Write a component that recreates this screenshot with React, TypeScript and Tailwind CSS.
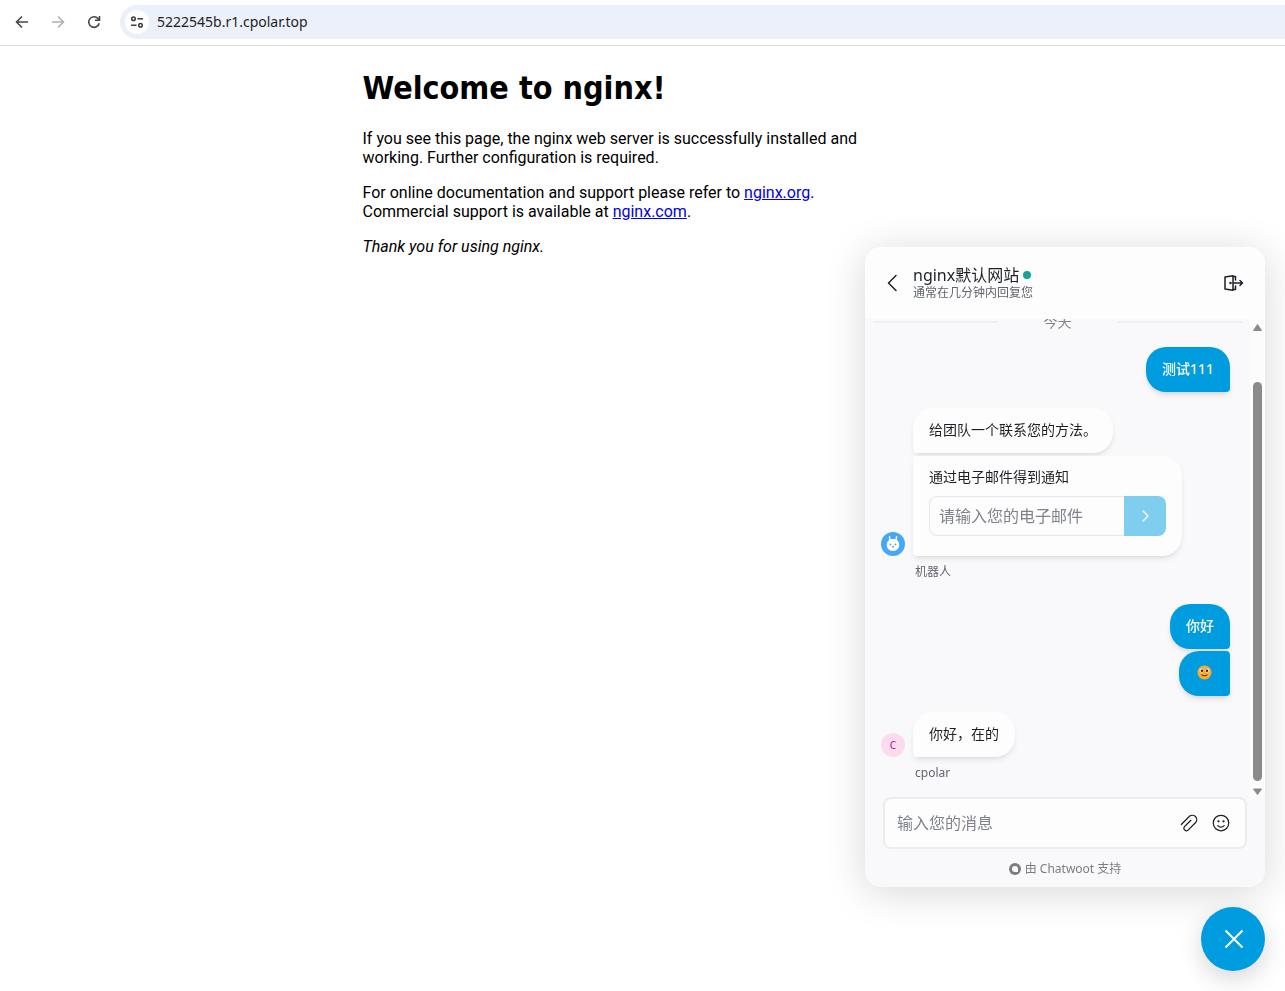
import type { ReactNode } from 'react';

function IconButton({ label, className = '', children }: { label: string; className?: string; children: ReactNode }) {
  return (
    <button type="button" aria-label={label} className={`flex shrink-0 items-center justify-center ${className}`}>
      {children}
    </button>
  );
}

function BrowserBar() {
  return (
    <header className="flex h-[46px] items-center border-b border-[#dcdde0] bg-white pb-px pl-3 font-['Noto_Sans',sans-serif]">
      <IconButton label="Back" className="size-5 text-[#474747]">
        <svg viewBox="0 0 20 20" className="size-5" fill="none" stroke="currentColor" strokeWidth="1.6">
          <path d="M16 10H4.8M10 4.5 4.5 10 10 15.5" />
        </svg>
      </IconButton>
      <IconButton label="Forward" className="ml-4 size-5 text-[#b0b0b0]">
        <svg viewBox="0 0 20 20" className="size-5" fill="none" stroke="currentColor" strokeWidth="1.6">
          <path d="M4 10h11.2M10 4.5 15.5 10 10 15.5" />
        </svg>
      </IconButton>
      <IconButton label="Reload" className="ml-4 size-5 text-[#474747]">
        <svg viewBox="0 0 20 20" className="size-5" fill="none" stroke="currentColor" strokeWidth="1.6">
          <path d="M15.2 11.2A5.3 5.3 0 1 1 14 6.5L15.3 8M15.5 4v4.3h-4.5" />
        </svg>
      </IconButton>
      <div className="ml-4 flex h-[34px] flex-1 items-center rounded-l-full bg-[#ecf0fa] pl-[5px]">
        <IconButton label="Site information" className="size-6 rounded-full bg-white text-[#3c3c3c]">
          <svg viewBox="0 0 16 16" className="size-4" fill="none" stroke="currentColor" strokeWidth="1.5">
            <circle cx="4.5" cy="4.8" r="1.8" />
            <path d="M8.5 4.8H14M2 11.2h5.5" />
            <circle cx="11.5" cy="11.2" r="1.8" />
          </svg>
        </IconButton>
        <input
          aria-label="Address"
          defaultValue="5222545b.r1.cpolar.top"
          className="ml-2 min-w-0 flex-1 bg-transparent text-sm text-[#1f1f1f] outline-none"
        />
      </div>
    </header>
  );
}

function WelcomePage() {
  return (
    <main className="mx-auto w-full max-w-[560px] pt-[21px] font-['Roboto',sans-serif] text-base leading-[19px] text-black">
      <h1 className="font-['DejaVu_Sans_Condensed','Noto_Sans',sans-serif] text-[32px] leading-[42px] font-bold">Welcome to nginx!</h1>
      <p className="mt-5">
        If you see this page, the nginx web server is successfully installed and
        <br />
        working. Further configuration is required.
      </p>
      <p className="mt-4">
        For online documentation and support please refer to{' '}
        <a href="http://nginx.org/" className="text-[#0000ee] underline">nginx.org</a>.<br />
        Commercial support is available at{' '}
        <a href="http://nginx.com/" className="text-[#0000ee] underline">nginx.com</a>.
      </p>
      <p className="mt-4">
        <em>Thank you for using nginx.</em>
      </p>
    </main>
  );
}

function WidgetHeader() {
  return (
    <header className="flex h-[72px] shrink-0 items-center bg-[#fdfdfd] pr-5 pl-4">
      <IconButton label="Back to home" className="size-6 text-[#1c2024]">
        <svg viewBox="0 0 24 24" className="size-6" fill="none" stroke="currentColor" strokeWidth="1.5" strokeLinecap="round" strokeLinejoin="round">
          <path d="M15 4.5 7.5 12l7.5 7.5" />
        </svg>
      </IconButton>
      <div className="ml-2 flex-1">
        <div className="flex items-center gap-1">
          <h2 className="text-base leading-5 text-[#1c2024]">nginx默认网站</h2>
          <span className="size-2 rounded-full bg-[#12a594]" />
        </div>
        <p className="text-xs leading-4 text-[#60646c]">通常在几分钟内回复您</p>
      </div>
      <IconButton label="End conversation" className="size-6 text-[#1c2024]">
        <svg viewBox="0 0 24 24" className="size-6" fill="none" stroke="currentColor" strokeWidth="1.5" strokeLinecap="round" strokeLinejoin="round">
          <path d="M12 4.8 4 6v12l8 1.2zM12 5.5h2.5V9M12 18.5h2.5V15M12 12h9.500M19 9.500l2.500 2.500-2.500 2.500" />
          <circle cx="9.5" cy="12" r=".5" />
        </svg>
      </IconButton>
    </header>
  );
}

function UserBubble({ children, className = '' }: { children: ReactNode; className?: string }) {
  return (
    <div className={`flex h-[45px] items-center self-end rounded-[20px] rounded-br-[4px] bg-[#009ce0] px-4 pb-[2px] text-sm font-medium text-white shadow-md shadow-black/10 ${className}`}>
      {children}
    </div>
  );
}

function AgentBubble({ children }: { children: ReactNode }) {
  return (
    <div className="flex h-[45px] items-center self-start rounded-[20px] rounded-bl-[4px] bg-[#fdfdfd] px-4 pb-[2px] text-sm text-[#1c2024] shadow-md shadow-black/8">
      {children}
    </div>
  );
}

function SmileyFace() {
  return (
    <svg viewBox="0 0 19 19" className="size-[19px]" role="img" aria-label="slightly smiling face">
      <circle cx="9.5" cy="9.5" r="7" fill="#fbab2c" />
      <circle cx="6.6" cy="7.6" r="2.1" fill="#fbe6d0" />
      <circle cx="12.4" cy="7.6" r="2.1" fill="#fbe6d0" />
      <circle cx="7" cy="7.7" r="1.3" fill="#402a32" />
      <circle cx="12" cy="7.7" r="1.3" fill="#402a32" />
      <path d="M6.800 12c1.500 1 3.900 1 5.400 0" fill="none" stroke="#402a32" strokeWidth="1" strokeLinecap="round" />
    </svg>
  );
}

function BotAvatar() {
  return (
    <svg viewBox="0 0 24 24" className="size-6 shrink-0" aria-hidden="true">
      <circle cx="12" cy="12" r="12" fill="#47a7f6" />
      <path d="M8.5 4.8 9 8.5M15.5 4.8 15 8.5" stroke="#fff" strokeWidth="1.4" strokeLinecap="round" />
      <path d="M12 7c4.5 0 6 2.5 6.2 5.8s-2.2 6.2-6.2 6.2-6.4-2.9-6.200-6.200S7.500 7 12 7Z" fill="#fff" />
      <circle cx="9.5" cy="12.5" r=".9" fill="#47a7f6" />
      <circle cx="14.5" cy="12.5" r=".9" fill="#47a7f6" />
      <path d="M11.2 14.5h1.6l-.8 1.200z" fill="#47a7f6" stroke="#47a7f6" strokeWidth=".8" />
    </svg>
  );
}

function EmailCard() {
  return (
    <form className="w-[269px] rounded-[20px] rounded-l-[4px] bg-[#fdfdfd] px-4 pt-[11px] pb-5 text-[#1c2024] shadow-md shadow-black/8">
      <label htmlFor="email" className="block text-sm leading-5">通过电子邮件得到通知</label>
      <div className="mt-[9px] flex h-10">
        <input
          id="email"
          type="email"
          placeholder="请输入您的电子邮件"
          className="min-w-0 flex-1 rounded-l-lg border border-r-0 border-[#e8e8ec] bg-transparent pl-[9px] text-base outline-none placeholder:text-[#80838d]"
        />
        <IconButton label="Submit email" className="w-[42px] rounded-r-lg bg-[#7fcdef] text-white">
          <svg viewBox="0 0 16 16" className="size-4" fill="none" stroke="currentColor" strokeWidth="1.3" strokeLinecap="round" strokeLinejoin="round">
            <path d="m6 3 5 5-5 5" />
          </svg>
        </IconButton>
      </div>
    </form>
  );
}

function Conversation() {
  return (
    <div className="flex min-h-0 flex-1">
      <div className="flex min-w-0 flex-1 flex-col justify-end overflow-hidden">
        <div className="flex shrink-0 items-center px-2 text-sm leading-5 text-[#80838d]">
          <span className="h-[2px] flex-1 bg-[#f0f0f3]" />
          <span className="w-[120px] text-center">今天</span>
          <span className="h-[2px] flex-1 bg-[#f0f0f3]" />
        </div>
        <div className="flex shrink-0 flex-col pt-[15px] pr-5 pb-[18px] pl-4">
          <UserBubble>测试111</UserBubble>
          <div className="mt-4 flex items-end gap-2">
            <BotAvatar />
            <div className="flex flex-col gap-[3px]">
              <AgentBubble>给团队一个联系您的方法。</AgentBubble>
              <EmailCard />
            </div>
          </div>
          <p className="mt-2 ml-[34px] text-xs leading-4 text-[#60646c]">机器人</p>
          <UserBubble className="mt-6">你好</UserBubble>
          <UserBubble className="mt-[2px] rounded-tr-[4px]">
            <SmileyFace />
          </UserBubble>
          <div className="mt-4 flex items-end gap-2">
            <span className="flex size-6 items-center justify-center rounded-full bg-[#fbdcef] text-[10px] font-medium text-[#c2298a]">C</span>
            <AgentBubble>你好，在的</AgentBubble>
          </div>
          <p className="mt-2 ml-[34px] text-xs leading-4 text-[#60646c]">cpolar</p>
        </div>
      </div>
      <div className="flex w-[15px] shrink-0 flex-col items-center bg-[#fcfcfc] text-[#8b8b8b]" aria-hidden="true">
        <svg viewBox="0 0 15 15" className="size-[15px]" fill="currentColor">
          <path d="M7.5 5.5 11.500 11.500h-8z" stroke="currentColor" strokeLinejoin="round" />
        </svg>
        <span className="mt-12 w-[9px] flex-1 rounded-full bg-[#8b8b8b]" />
        <svg viewBox="0 0 15 15" className="mt-[3px] size-[15px]" fill="currentColor">
          <path d="M3.500 5h8l-4 5.500z" stroke="currentColor" strokeLinejoin="round" />
        </svg>
      </div>
    </div>
  );
}

function Composer() {
  return (
    <footer className="shrink-0 px-5 pb-[10px]">
      <div className="flex h-12 items-center rounded-md bg-[#fdfdfd] pr-2 pl-3 shadow-[0_0_0_2px_#ececee]">
        <input
          aria-label="输入您的消息"
          placeholder="输入您的消息"
          className="min-w-0 flex-1 bg-transparent text-base outline-none placeholder:text-[#80838d]"
        />
        <IconButton label="Attach file" className="size-8 text-[#1c2024]">
          <svg viewBox="0 0 24 24" className="size-5" fill="currentColor">
            <path d="M11.772 3.743a6 6 0 0 1 8.66 8.302l-.19.197-8.8 8.798-.036.03a3.723 3.723 0 0 1-5.489-4.973.764.764 0 0 1 .085-.13l.054-.06.086-.088.142-.148.002.003 7.436-7.454a.75.75 0 0 1 .977-.074l.084.073a.75.75 0 0 1 .074.976l-.073.084-7.594 7.613a2.23 2.23 0 0 0 3.174 3.106l8.832-8.83A4.502 4.502 0 0 0 13 4.644l-.168.16-.013.014-9.536 9.536a.75.75 0 0 1-1.133-.977l.072-.084 9.549-9.55h.002Z" />
          </svg>
        </IconButton>
        <IconButton label="Insert emoji" className="size-8 text-[#1c2024]">
          <svg viewBox="0 0 24 24" className="size-5" fill="none" stroke="currentColor" strokeWidth="1.5" strokeLinecap="round">
            <circle cx="12" cy="12" r="9.3" />
            <path d="M8.200 15.200c2 2.300 5.600 2.300 7.600 0" />
            <circle cx="9" cy="10" r=".6" fill="currentColor" />
            <circle cx="15" cy="10" r=".6" fill="currentColor" />
          </svg>
        </IconButton>
      </div>
      <a href="https://www.chatwoot.com" className="mt-[14px] flex items-center justify-center gap-1 text-xs leading-4 text-[#7d7d80]">
        <svg viewBox="0 0 12 12" className="size-3" aria-hidden="true">
          <circle cx="6" cy="6" r="6" fill="#7d7d80" />
          <path d="M6 3a3 3 0 1 0 0 6h3V6a3 3 0 0 0-3-3Z" fill="#f9f9fb" />
        </svg>
        由 Chatwoot 支持
      </a>
    </footer>
  );
}

export default function App() {
  return (
    <div className="min-h-screen bg-white">
      <BrowserBar />
      <WelcomePage />
      <section
        aria-label="Chat"
        className="fixed right-5 bottom-[104px] flex h-[640px] max-h-[calc(100vh-124px)] w-[400px] flex-col overflow-hidden rounded-2xl bg-[#f9f9fb] font-['Noto_Sans','Noto_Sans_CJK_SC',sans-serif] shadow-[0_5px_40px_rgba(0,0,0,0.16)]"
      >
        <WidgetHeader />
        <Conversation />
        <Composer />
      </section>
      <IconButton label="Close chat" className="fixed right-5 bottom-5 size-16 rounded-full bg-[#009ce0] text-white shadow-[0_8px_24px_rgba(0,0,0,0.16)]">
        <svg viewBox="0 0 24 24" className="size-6" fill="none" stroke="currentColor" strokeWidth="2">
          <path d="m4.500 3.500 17 17M21.500 3.500l-17 17" />
        </svg>
      </IconButton>
    </div>
  );
}
